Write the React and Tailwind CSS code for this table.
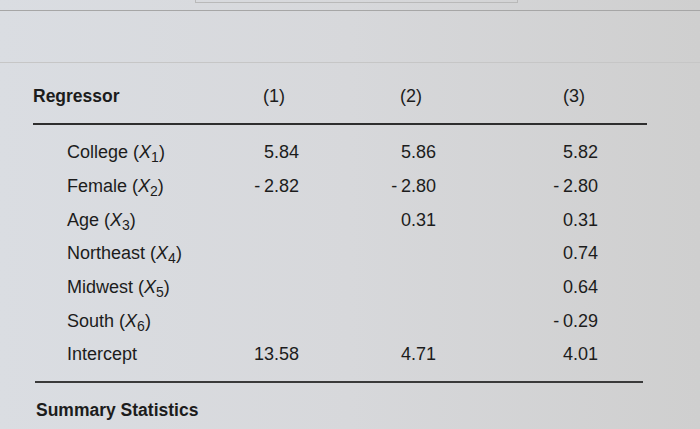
const rows = [
  { name: "College", sub: "1", c1: "5.84", c2: "5.86", c3: "5.82" },
  { name: "Female", sub: "2", c1: "-\u20092.82", c2: "-\u20092.80", c3: "-\u20092.80" },
  { name: "Age", sub: "3", c1: "", c2: "0.31", c3: "0.31" },
  { name: "Northeast", sub: "4", c1: "", c2: "", c3: "0.74" },
  { name: "Midwest", sub: "5", c1: "", c2: "", c3: "0.64" },
  { name: "South", sub: "6", c1: "", c2: "", c3: "-\u20090.29" },
  { name: "Intercept", sub: null, c1: "13.58", c2: "4.71", c3: "4.01" },
];

const Label = ({ name, sub }) => (
  <span>
    {name}
    {sub && (
      <>
        {" "}(<i>X</i>
        <span className="text-[14px] relative top-[4px]">{sub}</span>)
      </>
    )}
  </span>
);

export default function App() {
  return (
    <div
      className="w-[700px] h-[429px] overflow-hidden bg-gradient-to-r from-[#dadde2] via-[#d7d8db] to-[#cfcfcf] text-[#1c1c1c] flex flex-col"
      style={{ fontFamily: '"Liberation Sans", Arial, sans-serif' }}
    >
      {/* screen chrome at the top */}
      <div className="h-[3px] ml-[195px] w-[323px] border-x border-b border-[#b9b9b9]" />
      <div className="mt-[7px] border-t border-[#a6a6a6]" />
      <div className="mt-[51px] border-t border-[#c6c6c6]" />

      {/* header */}
      <div className="mt-[17px] ml-[33px] h-[32px] flex items-center text-[18px]">
        <div className="w-[207px] font-bold text-[17.5px]">Regressor</div>
        <div className="w-[59px] text-right pr-[14px]">(1)</div>
        <div className="w-[137px] text-right pr-[14px]">(2)</div>
        <div className="w-[162px] text-right pr-[13px]">(3)</div>
      </div>
      <div className="mt-[11px] ml-[33px] w-[614px] border-t-2 border-[#2e2e2e]" />

      {/* body */}
      <div className="mt-[11px] ml-[33px] flex flex-col text-[18px]">
        {rows.map((r) => (
          <div key={r.name} className="h-[33.7px] flex items-center">
            <div className="w-[207px] pl-[34px] whitespace-nowrap">
              <Label name={r.name} sub={r.sub} />
            </div>
            <div className="w-[59px] text-right whitespace-nowrap">{r.c1}</div>
            <div className="w-[137px] text-right whitespace-nowrap">{r.c2}</div>
            <div className="w-[162px] text-right whitespace-nowrap">{r.c3}</div>
          </div>
        ))}
      </div>
      <div className="mt-[9px] ml-[35px] w-[608px] border-t-2 border-[#3a3a3a]" />

      <div className="mt-[16px] ml-[36px] h-[22px] flex items-center font-bold text-[17.5px]">
        Summary Statistics
      </div>
    </div>
  );
}
